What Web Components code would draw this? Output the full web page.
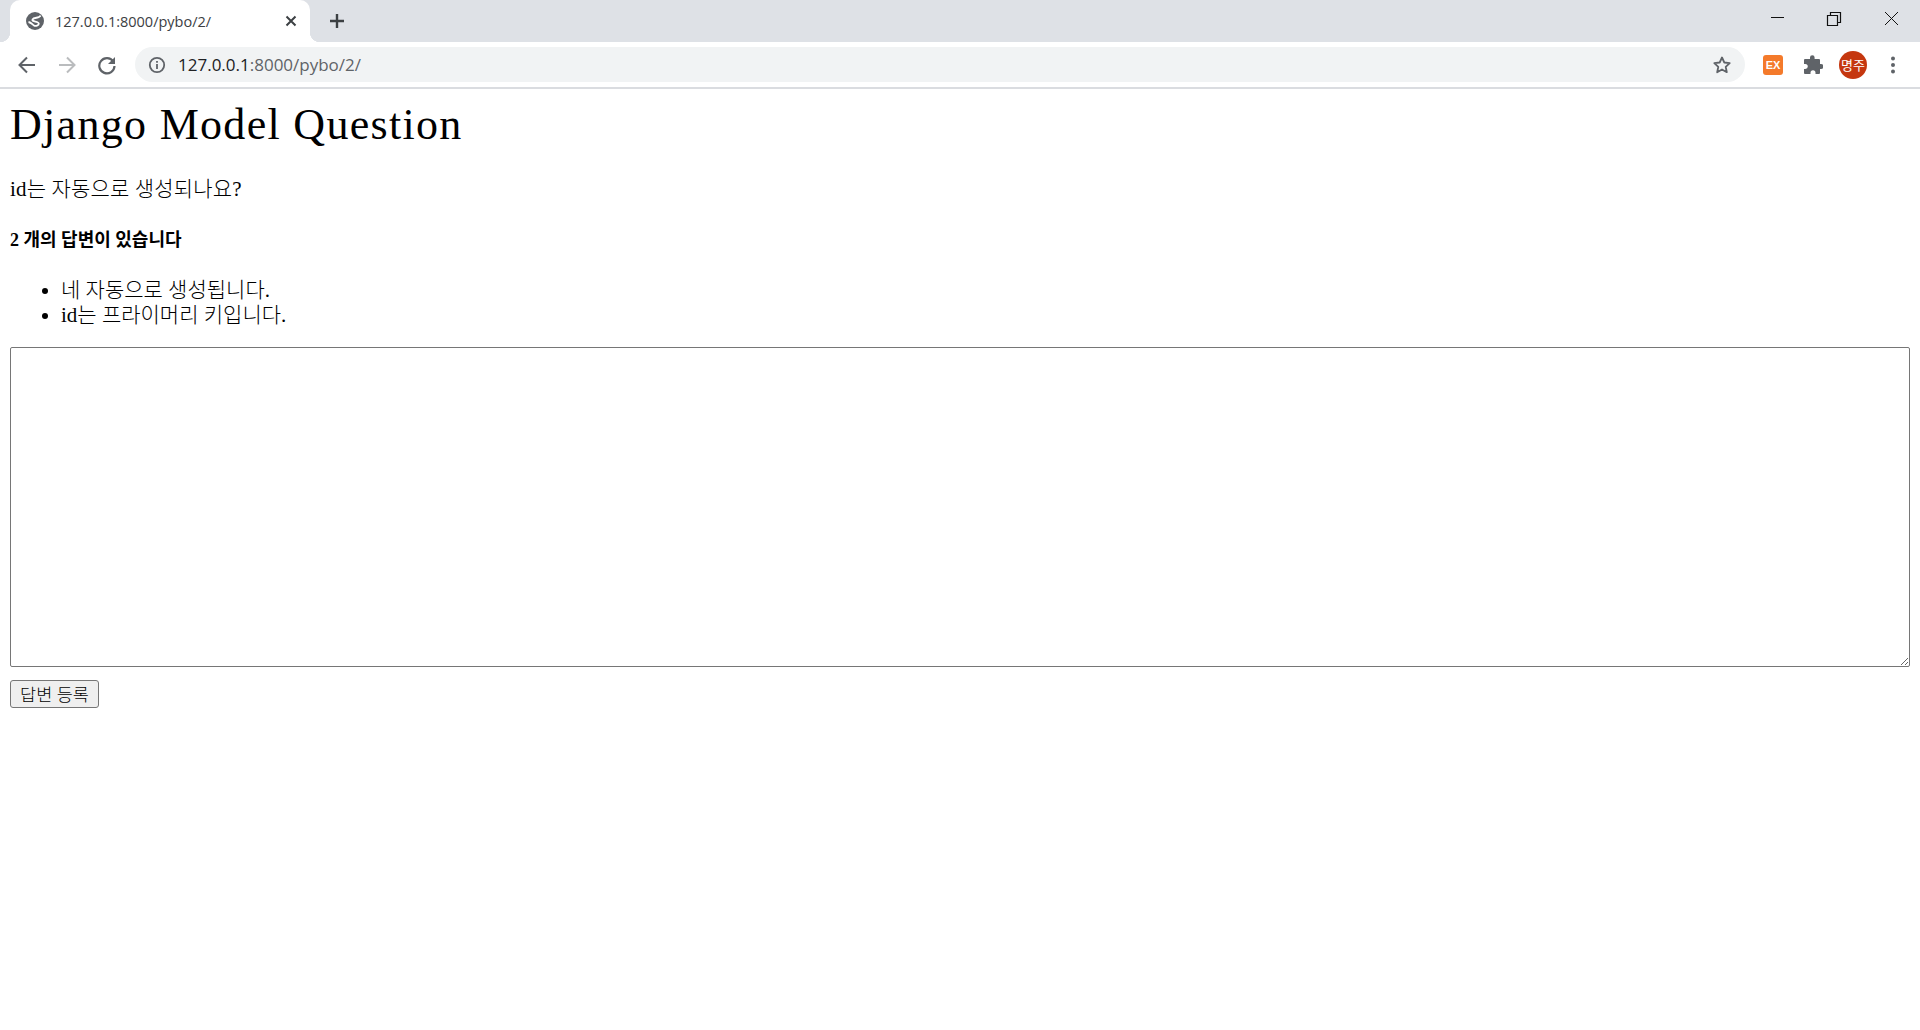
<!DOCTYPE html>
<html lang="ko">
<head>
<meta charset="utf-8">
<title>127.0.0.1:8000/pybo/2/</title>
<style>
  html, body { margin: 0; height: 100%; background: #fff; }
  body { display: flex; flex-direction: column; overflow: hidden; }
</style>
</head>
<body>
<browser-frame url="127.0.0.1:8000/pybo/2/"></browser-frame>
<question-page>
  <span slot="title">Django Model Question</span>
  <span slot="content">id는 자동으로 생성되나요?</span>
  <span slot="count">2 개의 답변이 있습니다</span>
  <answer-item>네 자동으로 생성됩니다.</answer-item>
  <answer-item>id는 프라이머리 키입니다.</answer-item>
</question-page>

<script>
class BrowserFrame extends HTMLElement {
  constructor() {
    super();
    const url = this.getAttribute("url");
    const host = url.split(":")[0];
    const rest = url.slice(host.length);

    const style = `
      :host { display: block; font-family: "Open Sans", "Noto Sans", sans-serif; flex: none; }
      .strip { height: 42px; background: #dee1e6; display: flex; position: relative; }
      .tab {
        width: 300px; height: 42px; margin-left: 10px; background: #fff;
        border-radius: 10px 10px 0 0; display: flex; align-items: center;
        padding: 0 13px 0 16px; box-sizing: border-box; position: relative;
      }
      .tab::before, .tab::after {
        content: ""; position: absolute; bottom: 0; width: 10px; height: 10px;
      }
      .tab::before { left: -10px; background: radial-gradient(circle at 0 0, #dee1e6 10px, #fff 10.5px); }
      .tab::after { right: -10px; background: radial-gradient(circle at 100% 0, #dee1e6 10px, #fff 10.5px); }
      .tab .title { font-size: 14.5px; color: #3c4043; margin-left: 11px; flex: 1; white-space: nowrap; }
      .plus { margin: 12px 0 0 18px; width: 18px; height: 18px; }
      .win { margin-left: auto; display: flex; }
      .win svg { width: 57px; height: 36px; display: block; }
      .bar {
        height: 45px; background: #fff; border-bottom: 2px solid #dadce0;
        display: flex; align-items: center;
      }
      .nav { width: 40px; height: 24px; display: flex; justify-content: center; align-items: center; flex: none; }
      .back { margin-left: 7px; }
      .omni {
        flex: 1; height: 35px; margin: 0 0 0 8px; background: #f1f3f4; border-radius: 18px;
        display: flex; align-items: center; padding: 0 13px 0 13px; font-size: 17px;
      }
      .omni .u { margin-left: 12px; white-space: nowrap; color: #202124; }
      .omni .u i { font-style: normal; color: #5f6368; }
      .omni .star { margin-left: auto; display: block; }
      .tools { display: flex; align-items: center; margin-left: 8px; margin-right: 7px; }
      .tool { width: 40px; display: flex; justify-content: center; align-items: center; }
      .ex {
        width: 20px; height: 20px; background: #f47a2b; border-radius: 3px; color: #fff;
        font: bold 11px "Liberation Sans", sans-serif; display: flex; align-items: center; justify-content: center;
      }
      .avatar {
        width: 28px; height: 28px; border-radius: 50%; background: #c5370f; color: #fff;
        font: 13px "Noto Sans CJK KR", sans-serif; display: flex; align-items: center; justify-content: center;
      }
    `;

    const html = `
      <div class="strip">
        <div class="tab">
          <svg width="18" height="18" viewBox="0 0 18 18"><circle cx="9" cy="9" r="9" fill="#5f6368"/><path d="M14.500 3.500C13.500 6.500 8 5 6.500 7.500C5.500 10 12.500 9 12.800 11.500C13 13.500 9.500 14.500 8 13.500C6.500 12.500 5 10.500 2.500 10" fill="none" stroke="#fff" stroke-width="1.800"/></svg>
          <span class="title">${url}</span>
          <svg width="12" height="12" viewBox="0 0 12 12"><path d="M1.500 1.500l9 9M10.500 1.500l-9 9" stroke="#3c4043" stroke-width="2"/></svg>
        </div>
        <svg class="plus" viewBox="0 0 18 18"><path d="M9 2v14M2 9h14" stroke="#3c4043" stroke-width="2.400"/></svg>
        <div class="win">
          <svg viewBox="0 0 57 36"><path d="M22 17.500h13" stroke="#111" stroke-width="1"/></svg>
          <svg viewBox="0 0 57 36"><path d="M21.500 15.500h10v10h-10zM24.500 15.500v-3h10v10h-3" fill="none" stroke="#111" stroke-width="1.200"/></svg>
          <svg viewBox="0 0 57 36"><path d="M22 12l13 13M35 12L22 25" stroke="#111" stroke-width="1"/></svg>
        </div>
      </div>
      <div class="bar">
        <div class="nav back"><svg width="20" height="20" viewBox="0 0 20 20"><path d="M18 10H3M10 2.500L2.500 10l7.500 7.500" fill="none" stroke="#5f6368" stroke-width="2"/></svg></div>
        <div class="nav"><svg width="20" height="20" viewBox="0 0 20 20"><path d="M2 10h15M10 2.500l7.500 7.500-7.500 7.500" fill="none" stroke="#babcbe" stroke-width="2"/></svg></div>
        <div class="nav"><svg width="20" height="20" viewBox="0 0 20 20"><path d="M16.200 6.500A7.600 7.600 0 1 0 17.500 11" fill="none" stroke="#5f6368" stroke-width="2.200"/><path d="M18 2v7h-7z" fill="#5f6368"/></svg></div>
        <div class="omni">
          <svg width="18" height="18" viewBox="0 0 18 18"><circle cx="9" cy="9" r="7.200" fill="none" stroke="#5f6368" stroke-width="1.800"/><path d="M9 8v5M9 5v1.800" stroke="#5f6368" stroke-width="1.800"/></svg>
          <span class="u">${host}<i>${rest}</i></span>
          <svg class="star" width="20" height="20" viewBox="0 0 20 20"><path d="M10 2.500l2.300 5 5.400.6-4 3.700 1.100 5.400L10 14.500l-4.800 2.700 1.100-5.400-4-3.700 5.400-.6z" fill="none" stroke="#5f6368" stroke-width="1.800" stroke-linejoin="round"/></svg>
        </div>
        <div class="tools">
          <div class="tool"><span class="ex">EX</span></div>
          <div class="tool"><svg width="20" height="20" viewBox="0 0 20 20"><path fill="#5f6368" d="M7 2.500a2.300 2.300 0 0 1 4.600 0V4H16a1 1 0 0 1 1 1v4h1a2.500 2.500 0 0 1 0 5h-1v4a1 1 0 0 1-1 1h-3.500v-1.300a2.500 2.500 0 0 0-5 0V19H2a1 1 0 0 1-1-1v-4h1.300a2.500 2.500 0 0 0 0-5H1V5a1 1 0 0 1 1-1h5z"/></svg></div>
          <div class="tool"><span class="avatar">명주</span></div>
          <div class="tool"><svg width="6" height="20" viewBox="0 0 6 20"><circle cx="3" cy="3.500" r="2" fill="#5f6368"/><circle cx="3" cy="10" r="2" fill="#5f6368"/><circle cx="3" cy="16.500" r="2" fill="#5f6368"/></svg></div>
        </div>
      </div>
    `;

    this.attachShadow({ mode: "open" });
    this.shadowRoot.innerHTML = `<style>${style}</style>${html}`;
  }
}

class AnswerItem extends HTMLElement {
  constructor() {
    super();
    this.attachShadow({ mode: "open" });
    this.shadowRoot.innerHTML = `
      <style>:host { display: list-item; list-style: disc; }</style>
      <slot></slot>
    `;
  }
}

class QuestionPage extends HTMLElement {
  constructor() {
    super();
    const style = `
      :host {
        display: block; padding: 0 10px; flex: 1;
        font-family: "Liberation Serif", "Noto Sans CJK KR", serif;
        font-size: 21px; font-weight: 300; line-height: 25px; color: #000;
      }
      h1 { font-size: 44px; font-weight: 400; letter-spacing: 1.3px; line-height: 50px; margin: 0; padding-top: 11px; }
      .content { margin: 27px 0 0; letter-spacing: .15px; }
      h5 { font-size: 18px; font-weight: 700; line-height: 20px; margin: 28px 0 0; }
      ul { margin: 28px 0 0; padding-left: 51px; }
      textarea {
        display: block; box-sizing: border-box; width: 100%; height: 320px; margin: 19px 0 0;
        border: 1px solid #767676; border-radius: 2px; background: #fff; padding: 2px; outline: none;
      }
      button {
        display: block; margin: 13px 0 0; width: 89px; height: 28px; padding: 0 0 2px;
        border: 1px solid #767676; border-radius: 3px; background: #efefef; color: #000;
        font: 300 17.500px "Liberation Serif", "Noto Sans CJK KR", serif;
      }
    `;
    this.attachShadow({ mode: "open" });
    this.shadowRoot.innerHTML = `
      <style>${style}</style>
      <h1><slot name="title"></slot></h1>
      <div class="content"><slot name="content"></slot></div>
      <h5><slot name="count"></slot></h5>
      <ul><slot></slot></ul>
      <textarea></textarea>
      <button type="button">답변 등록</button>
    `;
  }
}

customElements.define("browser-frame", BrowserFrame);
customElements.define("answer-item", AnswerItem);
customElements.define("question-page", QuestionPage);
</script>
</body>
</html>
